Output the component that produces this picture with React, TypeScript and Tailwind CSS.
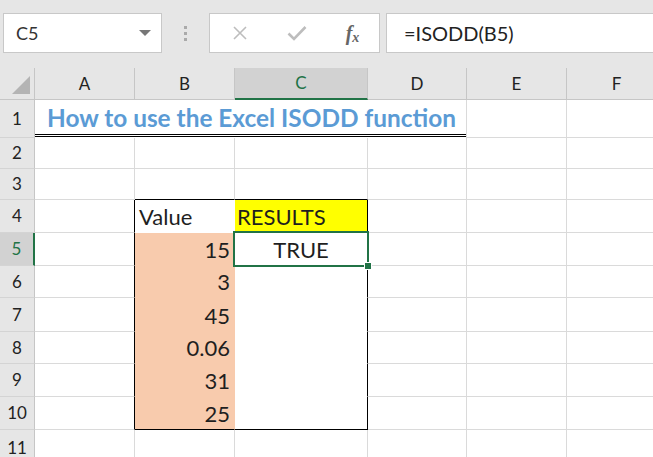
import React from 'react';

const GRID = 'border-b-[#dadada]';

function Cell({
  w,
  r = 'border-r-[#dadada]',
  b = GRID,
  className = '',
  children,
}: {
  w: string;
  r?: string;
  b?: string;
  className?: string;
  children?: React.ReactNode;
}) {
  return (
    <div className={`${w} shrink-0 h-full border-r border-b ${r} ${b} flex items-end pb-[1px] ${className}`}>
      {children}
    </div>
  );
}

function RowHead({ n, active = false }: { n: number; active?: boolean }) {
  return (
    <div
      className={`w-[35px] shrink-0 h-full border-b border-b-[#d4d4d4] flex items-center justify-center text-[17px] ${
        active
          ? 'bg-[#d2d2d2] border-r-2 border-r-[#217346] text-[#217346]'
          : 'bg-[#e6e6e6] border-r border-r-[#c6c6c6] text-[#222]'
      }`}
    >
      {n}
    </div>
  );
}

const values = ['15', '3', '45', '0.06', '31', '25'];
const heights = ['h-[33px]', 'h-[32px]', 'h-[34px]', 'h-[32px]', 'h-[33px]', 'h-[33px]'];

export default function App() {
  return (
    <div className="w-[653px] h-[457px] overflow-hidden bg-white font-['Lato',sans-serif] text-[#1f1f1f]">
      {/* formula bar */}
      <div className="h-[68px] bg-[#e6e6e6] flex items-start pt-[13px]">
        <div className="ml-[3px] w-[159px] h-[40px] bg-white border border-[#c8c8c8] flex items-center justify-between pl-[12px] pr-[10px]">
          <span className="text-[18px] text-[#333]">C5</span>
          <svg width="12" height="7" viewBox="0 0 12 7">
            <path d="M0 0h12L6 6z" fill="#777" />
          </svg>
        </div>
        <div className="w-[47px] h-[40px] flex flex-col items-center justify-center gap-[3px]">
          <span className="w-[3px] h-[3px] bg-[#aaa]" />
          <span className="w-[3px] h-[3px] bg-[#aaa]" />
          <span className="w-[3px] h-[3px] bg-[#aaa]" />
        </div>
        <div className="w-[171px] h-[40px] bg-white border border-[#c8c8c8] flex items-center">
          <div className="w-[58px] flex justify-center pl-[2px]">
            <svg width="16" height="14" viewBox="0 0 16 14">
              <path d="M2 1l12 12M14 1L2 13" stroke="#bdbdbd" strokeWidth="1.6" fill="none" />
            </svg>
          </div>
          <div className="w-[58px] flex justify-center">
            <svg width="20" height="16" viewBox="0 0 20 16">
              <path d="M1.5 8.5l5.5 5.5L18.5 2" stroke="#bdbdbd" strokeWidth="2.6" fill="none" />
            </svg>
          </div>
          <div className="flex-1 flex justify-center">
            <span className="font-['Liberation_Serif',serif] italic font-bold text-[#666] text-[20px] leading-none">
              f<span className="text-[14px] relative top-[2px]">x</span>
            </span>
          </div>
        </div>
        <div className="ml-[6px] flex-1 h-[40px] bg-white border-t border-b border-l border-[#c8c8c8] flex items-center pl-[17px]">
          <span className="text-[20px] text-[#222]">=ISODD(B5)</span>
        </div>
      </div>

      {/* column headers */}
      <div className="h-[32px] flex bg-[#e6e6e6] text-[17px] text-[#222]">
        <div className="w-[35px] shrink-0 h-full border-r border-b border-[#c6c6c6] flex items-end justify-end pr-[4px] pb-[5px]">
          <svg width="18" height="18" viewBox="0 0 18 18">
            <path d="M18 0v18H0z" fill="#b4b4b4" />
          </svg>
        </div>
        <div className="w-[100px] shrink-0 border-r border-b border-[#c6c6c6] flex items-center justify-center">A</div>
        <div className="w-[100px] shrink-0 border-r border-b border-[#c6c6c6] flex items-center justify-center">B</div>
        <div className="w-[133px] shrink-0 bg-[#d2d2d2] border-r border-r-[#c6c6c6] border-b-2 border-b-[#217346] flex items-center justify-center text-[#217346]">C</div>
        <div className="w-[99px] shrink-0 border-r border-b border-[#c6c6c6] flex items-center justify-center">D</div>
        <div className="w-[100px] shrink-0 border-r border-b border-[#c6c6c6] flex items-center justify-center">E</div>
        <div className="w-[100px] shrink-0 border-r border-b border-[#c6c6c6] flex items-center justify-center">F</div>
      </div>

      {/* row 1 */}
      <div className="h-[38px] flex text-[22px]">
        <RowHead n={1} />
        <div className="w-[432px] shrink-0 h-full border-r border-r-[#dadada] flex items-start">
          <div className="w-full h-[37px] border-b-[3px] border-double border-b-black flex items-end pl-[12px] pb-[1px]">
            <span className="font-bold text-[#5b9bd5] text-[24.4px] leading-[30px] whitespace-nowrap">
              How to use the Excel ISODD function
            </span>
          </div>
        </div>
        <Cell w="w-[100px]" />
        <Cell w="w-[100px]" />
      </div>

      {/* rows 2-3 */}
      {[2, 3].map((n) => (
        <div key={n} className="h-[31px] flex text-[22px]">
          <RowHead n={n} />
          <Cell w="w-[100px]" />
          <Cell w="w-[100px]" b={n === 3 ? 'border-b-black' : GRID} />
          <Cell w="w-[133px]" b={n === 3 ? 'border-b-black' : GRID} />
          <Cell w="w-[99px]" />
          <Cell w="w-[100px]" />
          <Cell w="w-[100px]" />
        </div>
      ))}

      {/* row 4 */}
      <div className="h-[33px] flex text-[22px] leading-[28px]">
        <RowHead n={4} />
        <Cell w="w-[100px]" r="border-r-black" />
        <Cell w="w-[100px]" r="border-r-white" b="border-b-white" className="pl-[4px]">
          Value
        </Cell>
        <Cell w="w-[133px]" r="border-r-black" b="border-b-[#ffff00]" className="bg-[#ffff00] pl-[2px]">
          RESULTS
        </Cell>
        <Cell w="w-[99px]" />
        <Cell w="w-[100px]" />
        <Cell w="w-[100px]" />
      </div>

      {/* rows 5-10 */}
      {values.map((v, i) => {
        const n = i + 5;
        const last = n === 10;
        return (
          <div key={n} className={`${heights[i]} flex text-[22px] leading-[28px]`}>
            <RowHead n={n} active={n === 5} />
            <Cell w="w-[100px]" r="border-r-black" />
            <Cell
              w="w-[100px]"
              r="border-r-[#f8cbad]"
              b={last ? 'border-b-black' : 'border-b-[#f8cbad]'}
              className="bg-[#f8cbad] justify-end pr-[4px]"
            >
              {v}
            </Cell>
            <Cell
              w="w-[133px]"
              r="border-r-black"
              b={last ? 'border-b-black' : 'border-b-white'}
              className={n === 5 ? 'relative justify-center' : 'justify-center'}
            >
              {n === 5 && (
                <>
                  <span>TRUE</span>
                  <div className="absolute left-[-2px] top-[-2px] right-[-2px] bottom-[-2px] border-2 border-[#217346]" />
                  <div className="absolute right-[-5px] bottom-[-5px] w-[8px] h-[8px] bg-[#217346] border border-white" />
                </>
              )}
            </Cell>
            <Cell w="w-[99px]" />
            <Cell w="w-[100px]" />
            <Cell w="w-[100px]" />
          </div>
        );
      })}

      {/* row 11 */}
      <div className="h-[40px] flex text-[22px]">
        <div className="w-[35px] shrink-0 h-full bg-[#e6e6e6] border-r border-r-[#c6c6c6] flex items-start justify-center pt-[5px] text-[17px] text-[#222]">
          11
        </div>
        <Cell w="w-[100px]" />
        <Cell w="w-[100px]" />
        <Cell w="w-[133px]" />
        <Cell w="w-[99px]" />
        <Cell w="w-[100px]" />
        <Cell w="w-[100px]" />
      </div>
    </div>
  );
}
